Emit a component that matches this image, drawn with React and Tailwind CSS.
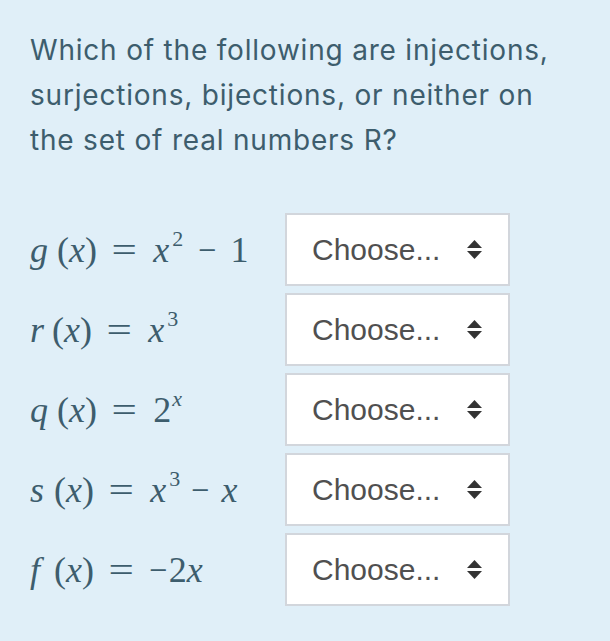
import React from "react";

const supCls = "text-[22px] -top-[16px] ml-[3px]";
const minus = "inline-block scale-x-90";

const rows = [
  {
    f: "g", fm: "ml-[9px]",
    rhs: (<><i>x</i><sup className={supCls}>2</sup><span className={`ml-[14px] ${minus}`}>−</span><span className="ml-[13px]">1</span></>),
  },
  {
    f: "r", fm: "ml-[8px]",
    rhs: (<><i>x</i><sup className={supCls}>3</sup></>),
  },
  {
    f: "q", fm: "ml-[9px]",
    rhs: (<>2<sup className="text-[22px] -top-[16px] ml-[1px]"><i>x</i></sup></>),
  },
  {
    f: "s", fm: "ml-[10px]",
    rhs: (<><i>x</i><sup className={supCls}>3</sup><span className={`ml-[10px] ${minus}`}>−</span><span className="ml-[11px]"><i>x</i></span></>),
  },
  {
    f: "f", fm: "ml-[14px]",
    rhs: (<><span className={`-ml-[2px] ${minus}`}>−</span>2<i>x</i></>),
  },
];

function Arrows() {
  return (
    <svg width="15" height="20" viewBox="0 0 15 20" className="shrink-0">
      <path d="M7.5 0 L15 8 L0 8 Z" fill="#333" />
      <path d="M0 11 L15 11 L7.5 19 Z" fill="#333" />
    </svg>
  );
}

export default function App() {
  return (
    <div
      className="w-[610px] h-[641px] bg-[#e0eff8] overflow-hidden"
      style={{ fontFamily: '"Liberation Sans", Arial, sans-serif' }}
    >
      <div
        className="ml-[30px] w-[535px] pt-[28px] text-[28px] leading-[45px] tracking-[0.8px] text-[#3d5d6d]"
        style={{ fontFamily: 'Inter, "Liberation Sans", sans-serif' }}
      >
        Which of the following are injections, surjections, bijections, or neither on the set of real numbers R?
      </div>
      <div className="mt-[50px] flex flex-col gap-[7px] pl-[30px]">
        {rows.map((r, i) => (
          <div key={i} className="flex items-center h-[73px]">
            <div
              className="w-[255px] text-[36px] text-[#3d5d6d] whitespace-nowrap"
              style={{ fontFamily: '"Liberation Serif", "Times New Roman", serif' }}
            >
              <i>{r.f}</i>
              <span className={r.fm}>(<i>x</i>)</span>
              <span className="ml-[17px] mr-[19px] inline-block scale-x-125">=</span>
              {r.rhs}
            </div>
            <div className="w-[225px] h-[73px] bg-white border-2 border-[#d2d6dc] flex items-center pl-[25px] pr-[26px]">
              <span className="text-[30px] text-[#505050] flex-1">Choose...</span>
              <Arrows />
            </div>
          </div>
        ))}
      </div>
    </div>
  );
}
